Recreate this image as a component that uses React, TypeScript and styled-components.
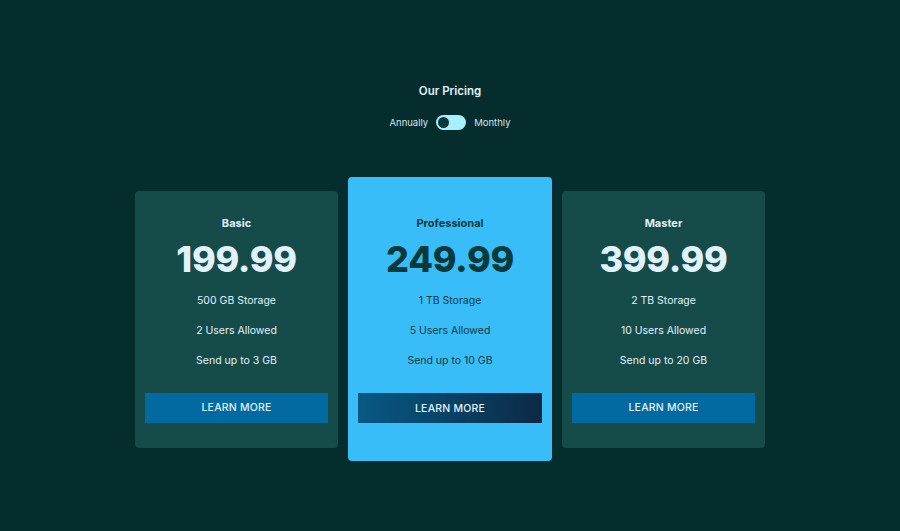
import { useState } from 'react';
import styled, { createGlobalStyle } from 'styled-components';

const plans = [
  { name: 'Basic', price: '199.99', features: ['500 GB Storage', '2 Users Allowed', 'Send up to 3 GB'] },
  { name: 'Professional', price: '249.99', features: ['1 TB Storage', '5 Users Allowed', 'Send up to 10 GB'], featured: true },
  { name: 'Master', price: '399.99', features: ['2 TB Storage', '10 Users Allowed', 'Send up to 20 GB'] },
];

const App = () => {
  const [monthly, setMonthly] = useState(false);

  return (
    <>
      <GlobalStyle />
      <Page>
        <Heading>Our Pricing</Heading>
        <ToggleRow>
          <ToggleLabel>Annually</ToggleLabel>
          <Switch onClick={() => setMonthly(m => !m)} aria-label="toggle billing">
            <Knob $on={monthly} />
          </Switch>
          <ToggleLabel>Monthly</ToggleLabel>
        </ToggleRow>
        <Cards>
          {plans.map(plan => (
            <Card key={plan.name} $featured={!!plan.featured}>
              <PlanName>{plan.name}</PlanName>
              <Price>{plan.price}</Price>
              <Features>
                {plan.features.map(f => (
                  <Feature key={f}>{f}</Feature>
                ))}
              </Features>
              <LearnMore $featured={!!plan.featured}>LEARN MORE</LearnMore>
            </Card>
          ))}
        </Cards>
      </Page>
    </>
  );
};

const GlobalStyle = createGlobalStyle`
  body { margin: 0; background: #062d2d; font-family: Inter, "Noto Sans", sans-serif; }
`;

const Page = styled.div`
  display: flex; flex-direction: column; align-items: center;
  min-height: 531px; padding-top: 84px; box-sizing: border-box;
  color: #e0f2fe;
`;

const Heading = styled.h1`
  margin: 0; font-size: 11.5px; font-weight: 600; line-height: 15px; color: #e0f2fe;
`;

const ToggleRow = styled.div`
  display: flex; align-items: center; gap: 8px; margin-top: 16px;
`;

const ToggleLabel = styled.span` font-size: 9.5px; color: #cfe7ee; `;

const Switch = styled.button`
  width: 30px; height: 15px; border-radius: 8px; border: none; padding: 0 2px;
  background: #a5f0fc; display: flex; align-items: center; cursor: pointer;
`;

const Knob = styled.span<{ $on: boolean }>`
  width: 11px; height: 11px; border-radius: 50%; background: #0b3838;
  transform: translateX(${p => (p.$on ? '15px' : '0')});
  transition: transform 0.2s;
`;

const Cards = styled.div`
  display: flex; align-items: center; gap: 10px; margin-top: 47px;
`;

const Card = styled.div<{ $featured: boolean }>`
  width: ${p => (p.$featured ? '204px' : '203px')}; box-sizing: border-box; border-radius: 4px;
  display: flex; flex-direction: column; align-items: center;
  padding: ${p => (p.$featured ? '39px 10px 38px' : '25px 10px 25px')};
  background: ${p => (p.$featured ? '#38bdf8' : '#154b49')};
  color: ${p => (p.$featured ? '#083a3c' : '#e0f2fe')};
`;

const PlanName = styled.h2`
  margin: 0; font-size: 11px; line-height: 14px; font-weight: 700;
`;

const Price = styled.div`
  margin-top: 6px; font-size: 36px; line-height: 46px; font-weight: 800; letter-spacing: -0.3px;
`;

const Features = styled.ul`
  list-style: none; margin: 12px 0 0; padding: 0;
  display: flex; flex-direction: column; align-items: center; gap: 16px;
`;

const Feature = styled.li` font-size: 10.5px; line-height: 14px; `;

const LearnMore = styled.button<{ $featured: boolean }>`
  margin-top: 25px; width: 100%; height: 30px; border: none; cursor: pointer;
  font-family: inherit; font-size: 10.5px; font-weight: 500; letter-spacing: 0.2px;
  color: #e0f2fe;
  background: ${p => (p.$featured ? 'linear-gradient(90deg, #075985 0%, #0c2a45 100%)' : '#0369a1')};
`;

export default App;
